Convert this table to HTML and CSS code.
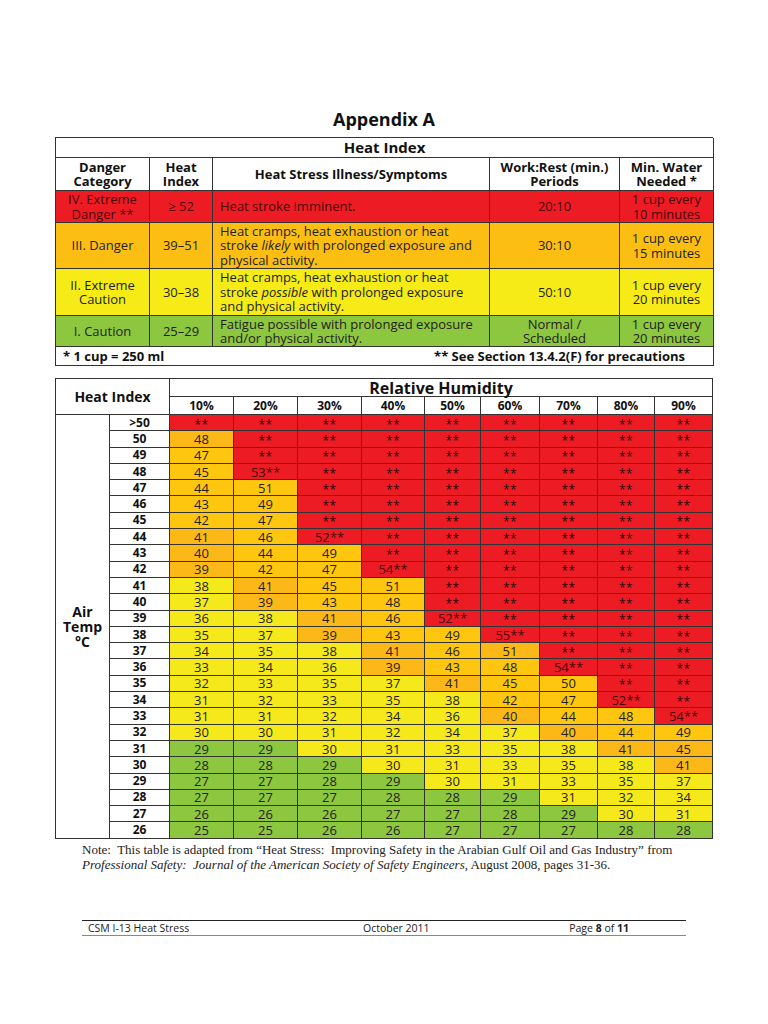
FILE: index.html
```html
<!DOCTYPE html>
<html lang="en">
<head>
<meta charset="utf-8">
<title>Appendix A – Heat Index</title>
<link rel="stylesheet" href="styles.css">
</head>
<body>
<div class="page">
  <h1 class="title">Appendix A</h1>

  <div class="hi">
    <div class="hi-title">Heat Index</div>
    <div class="hd">Danger<br>Category</div>
    <div class="hd">Heat<br>Index</div>
    <div class="hd">Heat Stress Illness/Symptoms</div>
    <div class="hd">Work:Rest (min.)<br>Periods</div>
    <div class="hd">Min. Water<br>Needed *</div>

    <div class="red dk">IV. Extreme<br>Danger **</div>
    <div class="red dk">≥ 52</div>
    <div class="red dk sym"><p>Heat stroke imminent.</p></div>
    <div class="red dk">20:10</div>
    <div class="red dk">1 cup every<br>10 minutes</div>

    <div class="org">III. Danger</div>
    <div class="org">39–51</div>
    <div class="org sym"><p>Heat cramps, heat exhaustion or heat<br>stroke <i>likely</i> with prolonged exposure and<br>physical activity.</p></div>
    <div class="org">30:10</div>
    <div class="org">1 cup every<br>15 minutes</div>

    <div class="yel">II. Extreme<br>Caution</div>
    <div class="yel">30–38</div>
    <div class="yel sym"><p>Heat cramps, heat exhaustion or heat<br>stroke <i>possible</i> with prolonged exposure<br>and physical activity.</p></div>
    <div class="yel">50:10</div>
    <div class="yel">1 cup every<br>20 minutes</div>

    <div class="grn">I. Caution</div>
    <div class="grn">25–29</div>
    <div class="grn sym"><p>Fatigue possible with prolonged exposure<br>and/or physical activity.</p></div>
    <div class="grn">Normal /<br>Scheduled</div>
    <div class="grn">1 cup every<br>20 minutes</div>

    <div class="hi-foot"><span>* 1 cup = 250 ml</span><span>** See Section 13.4.2(F) for precautions</span></div>
  </div>

  <div class="hm">
    <div class="hm-label">Heat Index</div>
    <div class="hm-rh">Relative Humidity</div>
    <div class="pc">10%</div><div class="pc">20%</div><div class="pc">30%</div><div class="pc">40%</div><div class="pc">50%</div><div class="pc">60%</div><div class="pc">70%</div><div class="pc">80%</div><div class="pc">90%</div>
    <div class="air">Air<br>Temp<br>°C</div>

    <div class="rl">&gt;50</div><div class="r st">**</div><div class="r st">**</div><div class="r st">**</div><div class="r st">**</div><div class="r st">**</div><div class="r st">**</div><div class="r st">**</div><div class="r st">**</div><div class="r st">**</div>
    <div class="rl">50</div><div class="d">48</div><div class="r st">**</div><div class="r st">**</div><div class="r st">**</div><div class="r st">**</div><div class="r st">**</div><div class="r st">**</div><div class="r st">**</div><div class="r st">**</div>
    <div class="rl">49</div><div class="o">47</div><div class="r st">**</div><div class="r st">**</div><div class="r st">**</div><div class="r st">**</div><div class="r st">**</div><div class="r st">**</div><div class="r st">**</div><div class="r st">**</div>
    <div class="rl">48</div><div class="o">45</div><div class="r">53**</div><div class="r st">**</div><div class="r st">**</div><div class="r st">**</div><div class="r st">**</div><div class="r st">**</div><div class="r st">**</div><div class="r st">**</div>
    <div class="rl">47</div><div class="o">44</div><div class="o">51</div><div class="r st">**</div><div class="r st">**</div><div class="r st">**</div><div class="r st">**</div><div class="r st">**</div><div class="r st">**</div><div class="r st">**</div>
    <div class="rl">46</div><div class="o">43</div><div class="o">49</div><div class="r st">**</div><div class="r st">**</div><div class="r st">**</div><div class="r st">**</div><div class="r st">**</div><div class="r st">**</div><div class="r st">**</div>
    <div class="rl">45</div><div class="o">42</div><div class="o">47</div><div class="r st">**</div><div class="r st">**</div><div class="r st">**</div><div class="r st">**</div><div class="r st">**</div><div class="r st">**</div><div class="r st">**</div>
    <div class="rl">44</div><div class="d">41</div><div class="o">46</div><div class="r">52**</div><div class="r st">**</div><div class="r st">**</div><div class="r st">**</div><div class="r st">**</div><div class="r st">**</div><div class="r st">**</div>
    <div class="rl">43</div><div class="d">40</div><div class="o">44</div><div class="o">49</div><div class="r st">**</div><div class="r st">**</div><div class="r st">**</div><div class="r st">**</div><div class="r st">**</div><div class="r st">**</div>
    <div class="rl">42</div><div class="d">39</div><div class="o">42</div><div class="o">47</div><div class="r">54**</div><div class="r st">**</div><div class="r st">**</div><div class="r st">**</div><div class="r st">**</div><div class="r st">**</div>
    <div class="rl">41</div><div class="y">38</div><div class="d">41</div><div class="o">45</div><div class="o">51</div><div class="r st">**</div><div class="r st">**</div><div class="r st">**</div><div class="r st">**</div><div class="r st">**</div>
    <div class="rl">40</div><div class="y">37</div><div class="d">39</div><div class="o">43</div><div class="o">48</div><div class="r st">**</div><div class="r st">**</div><div class="r st">**</div><div class="r st">**</div><div class="r st">**</div>
    <div class="rl">39</div><div class="y">36</div><div class="y">38</div><div class="d">41</div><div class="o">46</div><div class="r">52**</div><div class="r st">**</div><div class="r st">**</div><div class="r st">**</div><div class="r st">**</div>
    <div class="rl">38</div><div class="y">35</div><div class="y">37</div><div class="d">39</div><div class="o">43</div><div class="o">49</div><div class="r">55**</div><div class="r st">**</div><div class="r st">**</div><div class="r st">**</div>
    <div class="rl">37</div><div class="y">34</div><div class="y">35</div><div class="y">38</div><div class="d">41</div><div class="o">46</div><div class="d">51</div><div class="r st">**</div><div class="r st">**</div><div class="r st">**</div>
    <div class="rl">36</div><div class="y">33</div><div class="y">34</div><div class="y">36</div><div class="d">39</div><div class="o">43</div><div class="o">48</div><div class="r">54**</div><div class="r st">**</div><div class="r st">**</div>
    <div class="rl">35</div><div class="y">32</div><div class="y">33</div><div class="y">35</div><div class="y">37</div><div class="d">41</div><div class="o">45</div><div class="o">50</div><div class="r st">**</div><div class="r st">**</div>
    <div class="rl">34</div><div class="y">31</div><div class="y">32</div><div class="y">33</div><div class="y">35</div><div class="y">38</div><div class="o">42</div><div class="o">47</div><div class="r">52**</div><div class="r st">**</div>
    <div class="rl">33</div><div class="y">31</div><div class="y">31</div><div class="y">32</div><div class="y">34</div><div class="y">36</div><div class="d">40</div><div class="o">44</div><div class="o">48</div><div class="r">54**</div>
    <div class="rl">32</div><div class="y">30</div><div class="y">30</div><div class="y">31</div><div class="y">32</div><div class="y">34</div><div class="y">37</div><div class="d">40</div><div class="o">44</div><div class="o">49</div>
    <div class="rl">31</div><div class="g">29</div><div class="g">29</div><div class="y">30</div><div class="y">31</div><div class="y">33</div><div class="y">35</div><div class="y">38</div><div class="d">41</div><div class="d">45</div>
    <div class="rl">30</div><div class="g">28</div><div class="g">28</div><div class="g">29</div><div class="y">30</div><div class="y">31</div><div class="y">33</div><div class="y">35</div><div class="y">38</div><div class="d">41</div>
    <div class="rl">29</div><div class="g">27</div><div class="g">27</div><div class="g">28</div><div class="g">29</div><div class="y">30</div><div class="y">31</div><div class="y">33</div><div class="y">35</div><div class="y">37</div>
    <div class="rl">28</div><div class="g">27</div><div class="g">27</div><div class="g">27</div><div class="g">28</div><div class="g">28</div><div class="g">29</div><div class="y">31</div><div class="y">32</div><div class="y">34</div>
    <div class="rl">27</div><div class="g">26</div><div class="g">26</div><div class="g">26</div><div class="g">27</div><div class="g">27</div><div class="g">28</div><div class="g">29</div><div class="y">30</div><div class="y">31</div>
    <div class="rl">26</div><div class="g">25</div><div class="g">25</div><div class="g">26</div><div class="g">26</div><div class="g">27</div><div class="g">27</div><div class="g">27</div><div class="g">28</div><div class="g">28</div>
  </div>

  <p class="note">Note:&nbsp; This table is adapted from “Heat Stress:&nbsp; Improving Safety in the Arabian Gulf Oil and Gas Industry” from<br><i>Professional Safety:&nbsp; Journal of the American Society of Safety Engineers</i>, August 2008, pages 31-36.</p>

  <div class="footer">
    <span class="f-left">CSM I-13 Heat Stress</span>
    <span class="f-mid">October 2011</span>
    <span class="f-right">Page <b>8</b> of <b>11</b></span>
  </div>
</div>
</body>
</html>
```

FILE: styles.css
```css
* {
  box-sizing: border-box;
  margin: 0;
  padding: 0;
}

body {
  background: #ffffff;
  font-family: "Open Sans", "Noto Sans", sans-serif;
  color: #231f20;
}

.page {
  width: 658px;
  margin-left: 55px;
  padding-top: 107px;
}

.title {
  font-size: 18px;
  font-weight: 700;
  line-height: 24px;
  text-align: center;
  margin-bottom: 6px;
  color: #111;
}

/* ---------- Table 1: Heat Index categories ---------- */
.hi {
  display: grid;
  grid-template-columns: 94px 63px 277px 130px 94px;
  grid-template-rows: 20px 33px 32px 46px 47px 31px 19px;
  border-top: 1px solid #333;
  border-left: 1px solid #333;
}

.hi > div {
  border-right: 1px solid #333;
  border-bottom: 1px solid #333;
  display: flex;
  flex-direction: column;
  align-items: center;
  justify-content: center;
  text-align: center;
  font-size: 13px;
  line-height: 14.5px;
}

.hi > .hi-title {
  grid-column: 1 / -1;
  font-size: 15px;
  font-weight: 700;
  color: #111;
}

.hi > .hd {
  font-weight: 700;
  line-height: 14.5px;
  color: #111;
}

.hi > .sym {
  align-items: flex-start;
  text-align: left;
  padding-left: 7px;
}

.hi > .hi-foot {
  grid-column: 1 / -1;
  flex-direction: row;
  justify-content: space-between;
  padding: 0 28px 0 7px;
  font-weight: 700;
  color: #111;
}

.red { background: #ed1c24; }
.org { background: #fdbe14; }
.yel { background: #f6eb17; }
.grn { background: #8dc63f; }
.dk { color: #4a080b; }

/* ---------- Table 2: Heat Index matrix ---------- */
.hm {
  margin-top: 12px;
  display: grid;
  grid-template-columns: 54px 60px 64px 64px 64px 63px 56px 59px 58px 57px 58px;
  grid-template-rows: 18px 18px repeat(26, 16.3px);
  border-top: 1px solid #333;
  border-left: 1px solid #333;
}

.hm > div {
  border-right: 1px solid #333;
  border-bottom: 1px solid #333;
  display: flex;
  align-items: center;
  justify-content: center;
  text-align: center;
  font-size: 13px;
  line-height: 14px;
}

.hm > .hm-label {
  grid-column: 1 / 3;
  grid-row: 1 / 3;
  font-size: 14px;
  font-weight: 700;
  color: #111;
}

.hm > .hm-rh {
  grid-column: 3 / -1;
  font-size: 16px;
  font-weight: 700;
  color: #111;
}

.hm > .pc {
  font-size: 12px;
  font-weight: 700;
  color: #111;
}

.hm > .air {
  grid-column: 1;
  grid-row: 3 / span 26;
  font-size: 14px;
  font-weight: 700;
  line-height: 15px;
  color: #111;
}

.hm > .rl {
  font-size: 12px;
  font-weight: 700;
  color: #111;
}

.hm > .r { background: #ed1c24; color: #4a080b; }
.hm > .st { font-size: 12px; color: #2e0608; padding-top: 4px; letter-spacing: 0.5px; }
.hm > .o { background: #fec60e; }
.hm > .d { background: #fbb817; }
.hm > .y { background: #f5e91c; }
.hm > .g { background: #8dc63f; }

/* ---------- Note & footer ---------- */
.note {
  font-family: "Liberation Serif", "Times New Roman", serif;
  font-size: 13px;
  line-height: 15px;
  color: #222;
  margin-top: 3px;
  padding-left: 27px;
}

.footer {
  display: flex;
  align-items: center;
  width: 604px;
  margin-left: 27px;
  margin-top: 48px;
  height: 16px;
  border-top: 1px solid #222;
  border-bottom: 1px solid #888;
  padding-left: 6px;
  font-size: 10.5px;
  line-height: 14px;
  color: #222;
}

.f-left { width: 275px; }
.f-right { margin-left: auto; margin-right: 57px; }
.f-right b { font-weight: 700; }
```
